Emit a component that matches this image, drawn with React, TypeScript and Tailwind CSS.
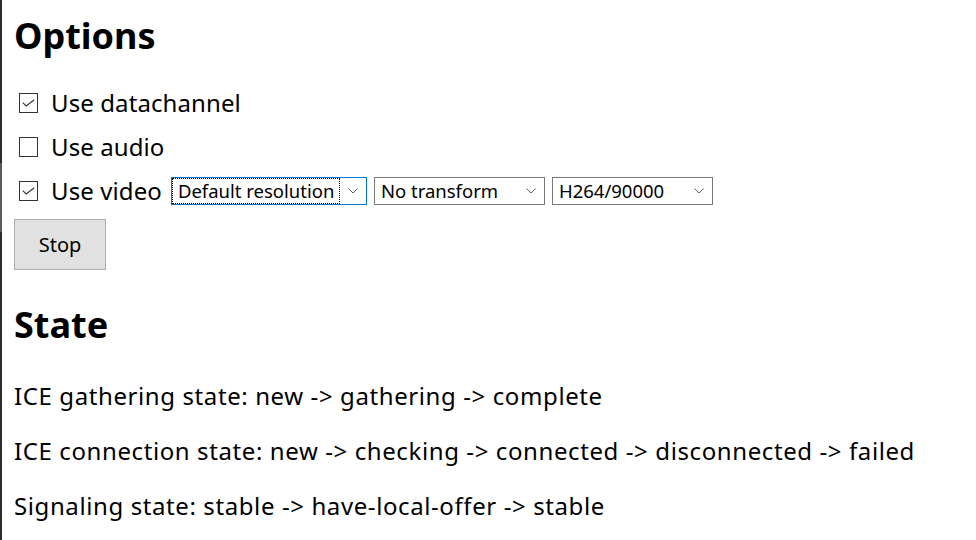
const font = { fontFamily: '"Noto Sans", "Open Sans", sans-serif' };

function Chevron() {
  return (
    <svg width="10" height="6" viewBox="0 0 10 6" className="shrink-0">
      <path d="M0.5 0.5 L5 5 L9.5 0.5" fill="none" stroke="#606060" strokeWidth="1" />
    </svg>
  );
}

function Checkbox({ checked }: { checked: boolean }) {
  return (
    <span className="flex h-[20px] w-[19px] shrink-0 items-center justify-center border border-[#333333] bg-white">
      {checked && (
        <svg width="13" height="8" viewBox="0 0 13 8">
          <path d="M0.8 3.6 L4.2 7 L12.2 0.8" fill="none" stroke="#333333" strokeWidth="1.1" />
        </svg>
      )}
    </span>
  );
}

function CheckRow({ label, checked, children }: { label: string; checked: boolean; children?: React.ReactNode }) {
  return (
    <div className="flex h-[44px] items-center pl-[5px]">
      <Checkbox checked={checked} />
      <span className="ml-[13px] whitespace-nowrap text-[24px] leading-[44px] tracking-[0.1px] text-black">{label}</span>
      {children}
    </div>
  );
}

function Select({ value, width, focused }: { value: string; width: string; focused?: boolean }) {
  return (
    <div
      className={`flex h-[28px] items-center bg-white ${width} ${
        focused ? "border border-[#0078d7]" : "border border-[#7a7a7a]"
      }`}
    >
      {focused ? (
        <span className="flex h-full flex-1 items-center whitespace-nowrap border border-dotted border-black pl-[5px] text-[18.5px] leading-[26px]">
          {value}
        </span>
      ) : (
        <span className="flex-1 whitespace-nowrap pl-[6px] text-[18.5px] leading-[26px]">{value}</span>
      )}
      <span className="flex w-[26px] justify-center">
        <Chevron />
      </span>
    </div>
  );
}

export default function App() {
  return (
    <div className="flex min-h-[540px] bg-white text-black" style={font}>
      <div className="flex w-[2px] shrink-0 flex-col bg-[#2b2b2b]">
        <div className="h-[163px]" />
        <div className="h-[69px] bg-[#5c5c5c]" />
      </div>
      <div className="flex flex-1 flex-col pl-[12px] pt-[12px]">
        <h2 className="text-[36px] font-bold leading-[48px]">Options</h2>

        <div className="mt-[21px] flex flex-col">
          <CheckRow label="Use datachannel" checked />
          <CheckRow label="Use audio" checked={false} />
          <CheckRow label="Use video" checked>
            <div className="ml-[9px] flex items-center gap-[7px]">
              <Select value="Default resolution" width="w-[196px]" focused />
              <Select value="No transform" width="w-[171px]" />
              <Select value="H264/90000" width="w-[161px]" />
            </div>
          </CheckRow>
        </div>

        <button className="mt-[6px] h-[51px] w-[92px] border border-[#adadad] bg-[#e1e1e1] text-[20px] text-black">
          Stop
        </button>

        <h2 className="mt-[31px] text-[36px] font-bold leading-[48px]">State</h2>

        <div className="mt-[19px] flex flex-col text-[24px] leading-[55px] tracking-[0.6px]">
          <p>ICE gathering state: new -&gt; gathering -&gt; complete</p>
          <p>ICE connection state: new -&gt; checking -&gt; connected -&gt; disconnected -&gt; failed</p>
          <p>Signaling state: stable -&gt; have-local-offer -&gt; stable</p>
        </div>
      </div>
    </div>
  );
}
